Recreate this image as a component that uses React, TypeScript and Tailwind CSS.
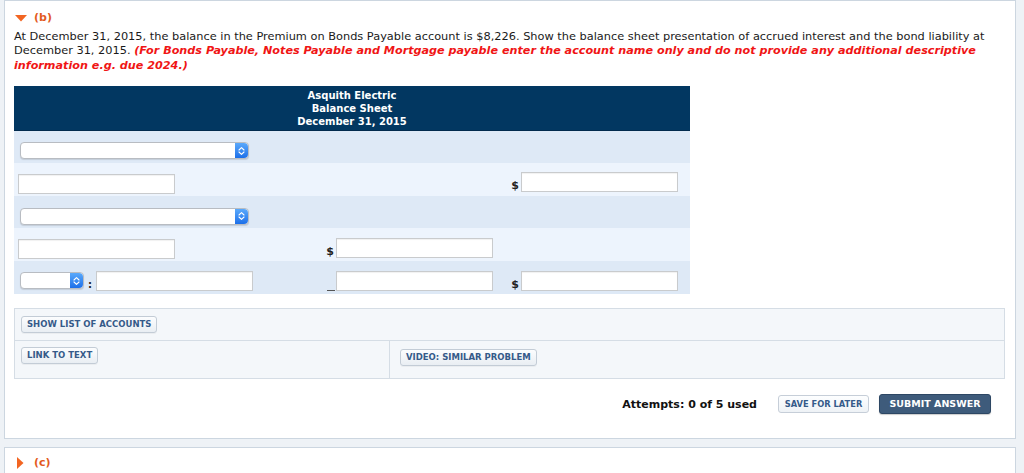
import React from "react";

function Stepper() {
  return (
    <div className="flex h-full w-[13px] items-center justify-center rounded-r-[4px] bg-gradient-to-b from-[#5aa9fb] to-[#1c6fe9]">
      <svg width="7" height="10" viewBox="0 0 7 10">
        <path d="M1 4 L3.5 1.6 L6 4 M1 6 L3.5 8.4 L6 6" stroke="white" strokeWidth="1.1" fill="none" strokeLinecap="round" strokeLinejoin="round" />
      </svg>
    </div>
  );
}

function Select({ wide }: { wide: boolean }) {
  return (
    <div
      className={
        wide
          ? "flex h-[17px] w-[229px] rounded-[4px] border border-[#b8bcc2] bg-white shadow-[0_1px_1px_rgba(0,0,0,0.12)]"
          : "flex h-[17px] w-[64px] rounded-[4px] border border-[#b8bcc2] bg-white shadow-[0_1px_1px_rgba(0,0,0,0.12)]"
      }
    >
      <div className="flex-1" />
      <Stepper />
    </div>
  );
}

function Field() {
  return (
    <input
      type="text"
      className="h-[20px] w-[157px] border border-[#c9cbcd] bg-white shadow-[inset_0_1px_1px_rgba(0,0,0,0.06)] outline-none"
    />
  );
}

function Dollar({ mark }: { mark: string }) {
  return (
    <span className="w-[14px] pb-[1px] pr-[2px] text-right text-[11px] font-bold leading-none text-[#222]">
      {mark}
    </span>
  );
}

function Btn({ children }: { children: React.ReactNode }) {
  return (
    <button className="block h-[17px] rounded-[3px] border border-[#c3ccd6] bg-gradient-to-b from-[#fcfdfe] to-[#e9eef3] px-[5px] text-[8.5px] font-bold leading-none text-[#355a89] shadow-[0_1px_0_rgba(0,0,0,0.04)]">
      {children}
    </button>
  );
}

export default function App() {
  return (
    <div className="h-[473px] w-[1024px] overflow-hidden bg-[#eef2f6] font-['DejaVu_Sans',Verdana,sans-serif] text-[#222]">
      {/* Panel (b) */}
      <div className="ml-[4px] h-[439px] w-[1012px] border border-[#ccd6e0] bg-white pl-[9px] pr-[10px] pt-[10px]">
        <div className="flex h-[14px] items-center">
          <svg width="12" height="7" viewBox="0 0 12 7" className="ml-[1px]">
            <polygon points="0,0 12,0 6,6.5" fill="#f26522" />
          </svg>
          <span className="ml-[7px] text-[11px] font-bold leading-[14px] text-[#e35b1e]">(b)</span>
        </div>
        <div className="mt-[4px] whitespace-nowrap text-[11.35px] leading-[14px] text-[#1a1a1a]">
          At December 31, 2015, the balance in the Premium on Bonds Payable account is $8,226. Show the balance sheet presentation of accrued interest and the bond liability at
          <br />
          December 31, 2015.{" "}
          <span className="text-[11.2px] font-bold italic text-[#f01515]">
            (For Bonds Payable, Notes Payable and Mortgage payable enter the account name only and do not provide any additional descriptive
            <br />
            information e.g. due 2024.)
          </span>
        </div>

        {/* Balance sheet table */}
        <div className="mt-[13px] w-[676px]">
          <div className="flex h-[45px] flex-col items-center justify-center border-b border-[#012a4d] bg-[#023761] text-[10px] font-bold leading-[13px] text-white">
            <div>Asquith Electric</div>
            <div>Balance Sheet</div>
            <div>December 31, 2015</div>
          </div>
          {/* row 1 */}
          <div className="flex h-[32px] items-center bg-[#dee9f6] pl-[6px] pt-[7px]">
            <Select wide={true} />
          </div>
          {/* row 2 */}
          <div className="flex h-[33px] items-center bg-[#edf4fd] pt-[8px]">
            <div className="w-[308px] pl-[4px]">
              <Field />
            </div>
            <div className="w-[185px]" />
            <div className="-mt-[3px] flex w-[183px] items-end">
              <Dollar mark="$" />
              <Field />
            </div>
          </div>
          {/* row 3 */}
          <div className="flex h-[32px] items-center bg-[#dee9f6] pl-[6px] pt-[8px]">
            <Select wide={true} />
          </div>
          {/* row 4 */}
          <div className="flex h-[33px] items-center bg-[#edf4fd] pt-[8px]">
            <div className="w-[308px] pl-[4px]">
              <Field />
            </div>
            <div className="-mt-[2px] flex w-[185px] items-end">
              <Dollar mark="$" />
              <Field />
            </div>
            <div className="w-[183px]" />
          </div>
          {/* row 5 */}
          <div className="flex h-[33px] items-center bg-[#dee9f6] pt-[6px]">
            <div className="flex w-[308px] items-center pl-[6px]">
              <Select wide={false} />
              <span className="w-[12px] self-end pb-[1px] text-center text-[10px] font-bold leading-none">:</span>
              <Field />
            </div>
            <div className="flex w-[185px] items-end">
              <span className="flex w-[14px] justify-end pr-[1px]">
                <span className="inline-block h-[1px] w-[8px] bg-[#555]" />
              </span>
              <Field />
            </div>
            <div className="flex w-[183px] items-end">
              <Dollar mark="$" />
              <Field />
            </div>
          </div>
        </div>

        {/* Buttons grid */}
        <div className="mt-[14px] h-[71px] border border-[#d5dde5] bg-[#f4f7fa]">
          <div className="flex h-[32px] items-start border-b border-[#d5dde5] pl-[6px] pt-[7px]">
            <Btn>SHOW LIST OF ACCOUNTS</Btn>
          </div>
          <div className="flex h-[37px]">
            <div className="flex w-[375px] items-start border-r border-[#d5dde5] pl-[6px] pt-[6px]">
              <Btn>LINK TO TEXT</Btn>
            </div>
            <div className="flex items-start pl-[10px] pt-[8px]">
              <Btn>VIDEO: SIMILAR PROBLEM</Btn>
            </div>
          </div>
        </div>

        {/* Actions */}
        <div className="mt-[15px] flex items-center justify-end pr-[14px]">
          <span className="text-[11px] font-bold leading-none text-[#111]">Attempts: 0 of 5 used</span>
          <button className="ml-[21px] h-[18px] w-[91px] rounded-[3px] border border-[#c6ced8] bg-gradient-to-b from-[#fdfeff] to-[#eef2f6] text-[8.3px] font-bold leading-none text-[#355a89]">
            SAVE FOR LATER
          </button>
          <button className="ml-[10px] h-[20px] w-[112px] rounded-[3px] border border-[#2d4764] bg-[#3e5b7b] text-[9.5px] font-bold leading-none text-white shadow-[0_1px_1px_rgba(0,0,0,0.2)]">
            SUBMIT ANSWER
          </button>
        </div>
      </div>

      {/* Panel (c) */}
      <div className="ml-[4px] mt-[8px] h-[40px] w-[1012px] border border-[#ccd6e0] bg-white pl-[11px] pt-[8px]">
        <div className="flex h-[14px] items-center">
          <svg width="7" height="12" viewBox="0 0 7 12" className="ml-[1px]">
            <polygon points="0,0 6.5,6 0,12" fill="#f26522" />
          </svg>
          <span className="ml-[10px] text-[11px] font-bold leading-[14px] text-[#e35b1e]">(c)</span>
        </div>
      </div>
    </div>
  );
}
